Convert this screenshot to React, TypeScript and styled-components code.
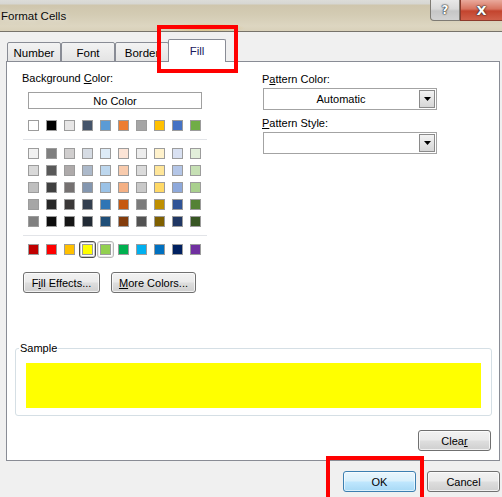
import React from 'react';
import styled, { createGlobalStyle } from 'styled-components';

const GlobalStyle = createGlobalStyle`
	html, body {
		margin: 0;
		padding: 0;
		background: #f0f0f0;
	}
	body {
		font-family: 'Liberation Sans', Arial, sans-serif;
		font-size: 11px;
		color: #000;
	}
`;

const THEME = ['#ffffff', '#000000', '#e7e6e6', '#44546a', '#5b9bd5', '#ed7d31', '#a5a5a5', '#ffc000', '#4472c4', '#70ad47'];

const TINTS = [
	['#f2f2f2', '#7f7f7f', '#d0cece', '#d6dce4', '#ddebf7', '#fce4d6', '#ededed', '#fff2cc', '#d9e1f2', '#e2efda'],
	['#d9d9d9', '#595959', '#aeaaaa', '#acb9ca', '#bdd7ee', '#f8cbad', '#dbdbdb', '#ffe699', '#b4c6e7', '#c6e0b4'],
	['#bfbfbf', '#404040', '#757171', '#8497b0', '#9bc2e6', '#f4b084', '#c9c9c9', '#ffd966', '#8ea9db', '#a9d08e'],
	['#a6a6a6', '#262626', '#3a3838', '#333f4f', '#2f75b5', '#c65911', '#7b7b7b', '#bf8f00', '#305496', '#548235'],
	['#808080', '#0d0d0d', '#161616', '#222b35', '#1f4e78', '#833c0c', '#525252', '#806000', '#203764', '#375623'],
];

const STANDARD = ['#c00000', '#ff0000', '#ffc000', '#ffff00', '#92d050', '#00b050', '#00b0f0', '#0070c0', '#002060', '#7030a0'];

const Window = styled.div`
	position: relative;
	width: 502px;
	height: 497px;
	overflow: hidden;
	background: #f0f0f0;
`;

const TitleBar = styled.div`
	height: 31px;
	display: flex;
	justify-content: space-between;
	border-bottom: 1px solid #77736a;
	background:
		radial-gradient(ellipse 40px 5px at 205px 28px, rgba(214, 176, 80, 0.7), transparent),
		linear-gradient(to bottom, #dcdcd8 0px, #d6d6d2 4px, #cfc6ad 5px, #d3cbb3 14px, #ddd6c1 26px, #d9d1ba 31px);
`;

const Title = styled.div`
	padding: 10px 0 0 1px;
	font-size: 11.5px;
	color: #0a0a0a;
	text-shadow: 0 0 6px rgba(255, 255, 255, 0.9);
`;

const Caption = styled.div`
	display: flex;
	align-items: flex-start;
	height: 21px;
`;

const CaptionButton = styled.div<{ $close?: boolean }>`
	width: ${(p) => (p.$close ? 41 : 28)}px;
	height: 20px;
	display: flex;
	align-items: center;
	justify-content: center;
	border: 1px solid ${(p) => (p.$close ? '#8c3a2c' : '#7e7b74')};
	border-top: none;
	border-right: ${(p) => (p.$close ? 'none' : '1px solid #7e7b74')};
	border-radius: ${(p) => (p.$close ? '0' : '0 0 0 4px')};
	background: ${(p) =>
		p.$close
			? 'linear-gradient(to bottom, #e9a99c 0%, #d7735f 45%, #c3442e 55%, #d0604a 100%)'
			: 'linear-gradient(to bottom, #e8e8e8 0%, #d9d9d9 45%, #c6c6c6 55%, #d2d2d2 100%)'};
	color: #fff;
	font-family: 'DejaVu Sans', sans-serif;
	font-weight: bold;
	font-size: ${(p) => (p.$close ? 13 : 12)}px;
	text-shadow: 0 0 1px #333, 0 0 1px #333, 0 0 2px #222;
`;

const Body = styled.div`
	padding: 7px 0 0 7px;
`;

const TabStrip = styled.div`
	display: flex;
	align-items: flex-end;
	height: 23px;
	position: relative;
	z-index: 1;
`;

const Tab = styled.div<{ $active?: boolean }>`
	box-sizing: border-box;
	width: ${(p) => (p.$active ? 58 : 54)}px;
	height: ${(p) => (p.$active ? 23 : 20)}px;
	margin-left: ${(p) => (p.$active ? -1 : 0)}px;
	display: flex;
	align-items: center;
	justify-content: center;
	padding-top: ${(p) => (p.$active ? 0 : 1)}px;
	border: 1px solid #898c95;
	border-bottom: ${(p) => (p.$active ? 'none' : '1px solid #898c95')};
	border-radius: 2px 2px 0 0;
	background: ${(p) => (p.$active ? '#ffffff' : 'linear-gradient(to bottom, #f3f3f3, #e4e4e4)')};
	color: ${(p) => (p.$active ? '#1b1b5e' : '#000')};
	font-size: 11.5px;
`;

const Panel = styled.div`
	box-sizing: border-box;
	width: 494px;
	height: 400px;
	margin: -1px 0 0 -1px;
	border: 1px solid #898c95;
	background: #fff;
	padding: 9px 0 0 0;
	display: flex;
	flex-direction: column;
`;

const Columns = styled.div`
	display: flex;
`;

const LeftColumn = styled.div`
	width: 200px;
	padding-left: 15px;
`;

const RightColumn = styled.div`
	padding: 1px 0 0 40px;
`;

const Label = styled.div`
	font-size: 11px;
	height: 14px;
	line-height: 14px;
	u {
		text-decoration: underline;
		text-underline-offset: 1px;
	}
`;

const NoColorBox = styled.div`
	box-sizing: border-box;
	width: 174px;
	height: 17px;
	margin: 7px 0 11px 6px;
	border: 1px solid #a0a0a0;
	display: flex;
	align-items: center;
	justify-content: center;
	font-size: 11px;
`;

const SwatchRow = styled.div`
	display: grid;
	grid-template-columns: repeat(10, 11px);
	column-gap: 7px;
	row-gap: 6px;
	margin-left: 6px;
`;

const Swatch = styled.div<{ $mark?: 'selected' | 'hover' }>`
	position: relative;
	box-sizing: border-box;
	width: 11px;
	height: 11px;
	border: 1px solid #9c9c9c;
	&::before {
		content: '';
		display: ${(p) => (p.$mark ? 'block' : 'none')};
		position: absolute;
		left: -4px;
		top: -4px;
		width: 17px;
		height: 17px;
		box-sizing: border-box;
		border-radius: 3px;
		border: 1px solid ${(p) => (p.$mark === 'selected' ? '#4d4d4d' : '#b8b8b8')};
		box-shadow: inset 0 0 0 1px ${(p) => (p.$mark === 'selected' ? '#c8c8c8' : '#ececec')};
	}
`;

const Separator = styled.div`
	width: 184px;
	height: 1px;
	margin: 8px 0 8px 1px;
	background: #e2e4e8;
`;

const ButtonRow = styled.div`
	display: flex;
	gap: 11px;
	margin: 17px 0 0 1px;
`;

const Button = styled.div<{ $w: number; $default?: boolean }>`
	box-sizing: border-box;
	width: ${(p) => p.$w}px;
	height: 21px;
	display: flex;
	align-items: center;
	justify-content: center;
	border: 1px solid ${(p) => (p.$default ? '#3c7fb1' : '#707070')};
	border-radius: 3px;
	background: ${(p) =>
		p.$default
			? 'linear-gradient(to bottom, #eaf6fd 0%, #d9f0fc 45%, #bee6fd 55%, #a7d9f5 100%)'
			: 'linear-gradient(to bottom, #f2f2f2 0%, #ebebeb 45%, #dddddd 55%, #cfcfcf 100%)'};
	box-shadow: inset 0 0 0 1px ${(p) => (p.$default ? 'rgba(255,255,255,0.6)' : 'rgba(255,255,255,0.7)')};
	font-size: 11px;
	u {
		text-underline-offset: 1px;
	}
`;

const Combo = styled.div`
	box-sizing: border-box;
	width: 174px;
	height: 22px;
	margin: 2px 0 6px 1px;
	border: 1px solid #a3a3a3;
	display: flex;
	align-items: stretch;
	background: #fff;
`;

const ComboValue = styled.div`
	flex: 1;
	display: flex;
	align-items: center;
	justify-content: center;
	font-size: 11px;
`;

const ComboArrow = styled.div`
	box-sizing: border-box;
	width: 16px;
	margin: 1px;
	border: 1px solid #8a8a8a;
	background: linear-gradient(to bottom, #f3f3f3, #d6d6d6);
	display: flex;
	align-items: center;
	justify-content: center;
`;

const SampleGroup = styled.fieldset`
	box-sizing: border-box;
	width: 477px;
	height: 75px;
	margin: 48px 0 0 8px;
	padding: 0 10px 0 10px;
	border: 1px solid #d5dfe5;
	border-radius: 3px;
	legend {
		padding: 0 1px;
		margin-left: -7px;
		font-size: 11px;
		line-height: 14px;
	}
`;

const SampleFill = styled.div<{ $color: string }>`
	width: 455px;
	height: 45px;
	margin-top: 8px;
	background: ${(p) => p.$color};
`;

const Spacer = styled.div`
	flex: 1;
`;

const ClearRow = styled.div`
	display: flex;
	justify-content: flex-end;
	padding: 0 8px 9px 0;
`;

const Footer = styled.div`
	display: flex;
	justify-content: flex-end;
	gap: 11px;
	padding: 10px 2px 0 0;
`;

const Highlight = styled.div<{ $x: number; $y: number; $w: number; $h: number }>`
	position: absolute;
	left: ${(p) => p.$x}px;
	top: ${(p) => p.$y}px;
	width: ${(p) => p.$w}px;
	height: ${(p) => p.$h}px;
	box-sizing: border-box;
	border: 4px solid #ff0000;
	pointer-events: none;
	z-index: 5;
`;

const DownArrow = () => (
	<svg width="7" height="4" viewBox="0 0 7 4">
		<path d="M0 0h7L3.5 4z" fill="#000" />
	</svg>
);

const App = () => {
	const sample = '#ffff00';
	return (
		<Window>
			<GlobalStyle />
			<TitleBar>
				<Title>Format Cells</Title>
				<Caption>
					<CaptionButton>?</CaptionButton>
					<CaptionButton $close>X</CaptionButton>
				</Caption>
			</TitleBar>
			<Body>
				<TabStrip>
					<Tab>Number</Tab>
					<Tab>Font</Tab>
					<Tab>Border</Tab>
					<Tab $active>Fill</Tab>
				</TabStrip>
				<Panel>
					<Columns>
						<LeftColumn>
							<Label>
								Background <u>C</u>olor:
							</Label>
							<NoColorBox>No Color</NoColorBox>
							<SwatchRow>
								{THEME.map((c) => (
									<Swatch key={c} style={{ background: c }} />
								))}
							</SwatchRow>
							<Separator />
							<SwatchRow>
								{TINTS.flat().map((c, i) => (
									<Swatch key={i} style={{ background: c }} />
								))}
							</SwatchRow>
							<Separator />
							<SwatchRow>
								{STANDARD.map((c, i) => (
									<Swatch
										key={c}
										style={{ background: c }}
										$mark={i === 3 ? 'selected' : i === 4 ? 'hover' : undefined}
									/>
								))}
							</SwatchRow>
							<ButtonRow>
								<Button $w={77}>
									F<u>i</u>ll Effects...
								</Button>
								<Button $w={85}>
									<u>M</u>ore Colors...
								</Button>
							</ButtonRow>
						</LeftColumn>
						<RightColumn>
							<Label>
								P<u>a</u>ttern Color:
							</Label>
							<Combo>
								<ComboValue>Automatic</ComboValue>
								<ComboArrow>
									<DownArrow />
								</ComboArrow>
							</Combo>
							<Label>
								<u>P</u>attern Style:
							</Label>
							<Combo>
								<ComboValue />
								<ComboArrow>
									<DownArrow />
								</ComboArrow>
							</Combo>
						</RightColumn>
					</Columns>
					<SampleGroup>
						<legend>Sample</legend>
						<SampleFill $color={sample} />
					</SampleGroup>
					<Spacer />
					<ClearRow>
						<Button $w={73}>
							Clea<u>r</u>
						</Button>
					</ClearRow>
				</Panel>
			</Body>
			<Footer>
				<Button $w={73} $default>
					OK
				</Button>
				<Button $w={73}>Cancel</Button>
			</Footer>
			<Highlight $x={157} $y={25} $w={81} $h={48} />
			<Highlight $x={326} $y={456} $w={98} $h={50} />
		</Window>
	);
};

export default App;
